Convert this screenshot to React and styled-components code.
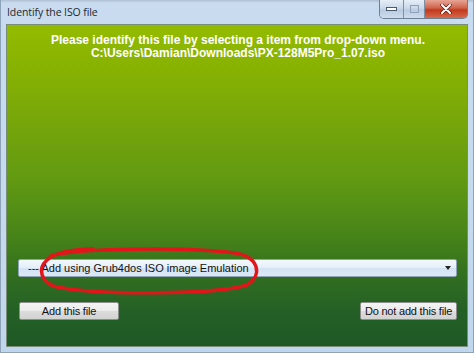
import React from "react";
import styled, { createGlobalStyle } from "styled-components";

const Global = createGlobalStyle`
  html, body { margin: 0; padding: 0; }
  body { width: 474px; height: 353px; overflow: hidden; font-family: "Liberation Sans", Arial, sans-serif; }
`;

const Window = styled.div`
  width: 474px;
  height: 353px;
  box-sizing: border-box;
  display: flex;
  flex-direction: column;
  background: linear-gradient(to bottom, #aebfd1 0px, #c9dcef 3px, #c6daee 60%, #c0d6ec 100%);
  border-left: 1px solid #8ea2b8;
  border-right: 1px solid #8ea2b8;
  border-bottom: 1px solid #8ea2b8;
`;

const TitleBar = styled.div`
  height: 24px;
  display: flex;
  align-items: flex-start;
  justify-content: space-between;
  padding-left: 6px;
  flex-shrink: 0;
`;

const Title = styled.span`
  font-family: "Open Sans", "Noto Sans", sans-serif;
  font-size: 10.5px;
  color: #1c2733;
  margin-top: 5px;
  letter-spacing: -0.1px;
`;

const Controls = styled.div`
  display: flex;
  margin-right: 5px;
  height: 18px;
  border: 1px solid #6d7f93;
  border-top: none;
  border-radius: 0 0 5px 5px;
  overflow: hidden;
`;

const CtrlButton = styled.div`
  width: ${p => p.$w}px;
  height: 100%;
  display: flex;
  align-items: center;
  justify-content: center;
  border-left: ${p => (p.$first ? "none" : "1px solid #7f90a4")};
  background: ${p =>
    p.$close
      ? "linear-gradient(to bottom, #e7a595 0%, #d0624a 45%, #c2391d 55%, #d6694a 100%)"
      : "linear-gradient(to bottom, #e6eef7 0%, #cad9ea 45%, #b8cbe0 55%, #cedcec 100%)"};
`;

const Panel = styled.div`
  flex: 1;
  margin: 0 5px 5px 5px;
  border: 1px solid #7a8d79;
  background: linear-gradient(
    to bottom,
    #93bb00 0%,
    #89b302 12%,
    #77a60a 30%,
    #629a12 48%,
    #468319 66%,
    #2f6c21 80%,
    #235f26 90%,
    #1e5925 100%
  );
  display: flex;
  flex-direction: column;
  position: relative;
`;

const Heading = styled.div`
  text-align: center;
  color: #ffffff;
  font-weight: bold;
  font-size: 12px;
  line-height: 13px;
  padding-top: 9px;
  padding-left: 2px;
`;

const Spacer = styled.div`
  flex: 1;
`;

const Select = styled.div`
  margin: 0 10px 0 11px;
  height: 18px;
  box-sizing: border-box;
  border: 1px solid #8ea3b8;
  border-radius: 2px;
  background: linear-gradient(to bottom, #f3f8fd 0%, #e4eef8 50%, #d3e3f3 51%, #dbe8f6 100%);
  display: flex;
  align-items: center;
  justify-content: space-between;
  padding: 0 5px 0 9px;
  font-size: 11px;
  color: #111;
`;

const Arrow = styled.span`
  width: 0;
  height: 0;
  border-left: 3.5px solid transparent;
  border-right: 3.5px solid transparent;
  border-top: 4px solid #222;
`;

const ButtonRow = styled.div`
  display: flex;
  justify-content: space-between;
  margin: 25px 10px 26px 12px;
`;

const Button = styled.div`
  width: ${p => p.$w}px;
  height: 18px;
  box-sizing: border-box;
  border: 1px solid #8d8d8d;
  border-radius: 2px;
  background: linear-gradient(to bottom, #f4f4f4 0%, #ebebeb 50%, #dcdcdc 51%, #d2d2d2 100%);
  display: flex;
  align-items: center;
  justify-content: center;
  white-space: nowrap;
  font-size: 11px;
  letter-spacing: -0.2px;
  color: #111;
`;

const Circle = styled.svg`
  position: absolute;
  left: 28px;
  top: 220px;
  pointer-events: none;
`;

export default function App() {
  return (
    <>
      <Global />
      <Window>
        <TitleBar>
          <Title>Identify the ISO file</Title>
          <Controls>
            <CtrlButton $w={23} $first>
              <svg width="11" height="4"><rect x="0.5" y="0.5" width="10" height="3" fill="#fff" stroke="#4a5b70" /></svg>
            </CtrlButton>
            <CtrlButton $w={20}>
              <svg width="9" height="8"><rect x="0.5" y="0.5" width="8" height="7" fill="none" stroke="#8fa1b6" /></svg>
            </CtrlButton>
            <CtrlButton $w={42} $close>
              <svg width="12" height="10" viewBox="0 0 12 10">
                <path d="M2 1 L10 9 M10 1 L2 9" stroke="#5a1a10" strokeWidth="3.4" strokeLinecap="round" />
                <path d="M2 1 L10 9 M10 1 L2 9" stroke="#ffffff" strokeWidth="2" strokeLinecap="round" />
              </svg>
            </CtrlButton>
          </Controls>
        </TitleBar>
        <Panel>
          <Heading>
            Please identify this file by selecting a item from drop-down menu.
            <br />
            C:\Users\Damian\Downloads\PX-128M5Pro_1.07.iso
          </Heading>
          <Spacer />
          <Select>
            <span>--- Add using Grub4dos ISO image Emulation</span>
            <Arrow />
          </Select>
          <ButtonRow>
            <Button $w={100}>Add this file</Button>
            <Button $w={97}>Do not add this file</Button>
          </ButtonRow>
          <Circle width="232" height="50" viewBox="0 0 232 50">
            <path
              d="M16 11 C 40 3, 150 2, 200 8 C 224 12, 228 30, 212 40 C 180 50, 60 50, 22 42 C 6 38, 2 24, 12 15 C 20 7, 40 4, 58 4"
              fill="none"
              stroke="#e0161a"
              strokeWidth="3.5"
              strokeLinecap="round"
            />
          </Circle>
        </Panel>
      </Window>
    </>
  );
}
